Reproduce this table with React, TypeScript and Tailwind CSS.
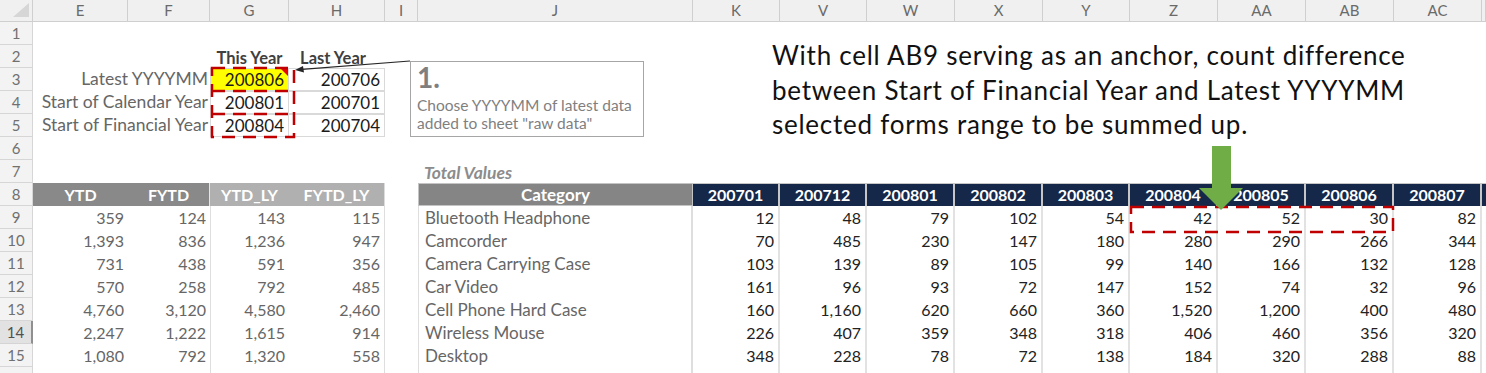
import React from 'react';

const letters = ['E', 'F', 'G', 'H', 'I', 'J', 'K', 'V', 'W', 'X', 'Y', 'Z', 'AA', 'AB', 'AC', ''];
const months = ['200701', '200712', '200801', '200802', '200803', '200804', '200805', '200806', '200807'];

const rows = [
    { cat: 'Bluetooth Headphone', left: ['359', '124', '143', '115'], vals: ['12', '48', '79', '102', '54', '42', '52', '30', '82'] },
    { cat: 'Camcorder', left: ['1,393', '836', '1,236', '947'], vals: ['70', '485', '230', '147', '180', '280', '290', '266', '344'] },
    { cat: 'Camera Carrying Case', left: ['731', '438', '591', '356'], vals: ['103', '139', '89', '105', '99', '140', '166', '132', '128'] },
    { cat: 'Car Video', left: ['570', '258', '792', '485'], vals: ['161', '96', '93', '72', '147', '152', '74', '32', '96'] },
    { cat: 'Cell Phone Hard Case', left: ['4,760', '3,120', '4,580', '2,460'], vals: ['160', '1,160', '620', '660', '360', '1,520', '1,200', '400', '480'] },
    { cat: 'Wireless Mouse', left: ['2,247', '1,222', '1,615', '914'], vals: ['226', '407', '359', '348', '318', '406', '460', '356', '320'] },
    { cat: 'Desktop', left: ['1,080', '792', '1,320', '558'], vals: ['348', '228', '78', '72', '138', '184', '320', '288', '88'] },
];

const periods = [
    { label: 'Latest YYYYMM', cur: '200806', prev: '200706' },
    { label: 'Start of Calendar Year', cur: '200801', prev: '200701' },
    { label: 'Start of Financial Year', cur: '200804', prev: '200704' },
];

function RowHead({ n, active }: { n?: number; active?: boolean }) {
    return (
        <div
            className={`col-start-1 flex items-center justify-center border-b text-[15px] ${active
                ? 'bg-[#e2e2e2] border-b-[#d4d4d4] border-r-2 border-r-[#8f8f8f] text-[#505050]'
                : 'bg-[#f3f3f3] border-r border-[#d6d6d6] text-[#707070]'
                }`}
        >
            {n}
        </div>
    );
}

// one body row of the report (E..H, I, J, K..AC, partial col)
function DataRow({ n, cat, left, vals, active }: { n?: number; cat: string; left: string[]; vals: string[]; active?: boolean }) {
    return (
        <>
            <RowHead n={n} active={active} />
            <div className="flex items-center justify-end pr-1 text-[#666]">{left[0]}</div>
            <div className="flex items-center justify-end pr-1 text-[#666]">{left[1]}</div>
            <div className="flex items-center justify-end pr-1 text-[#666] border-l border-[#dedede]">{left[2]}</div>
            <div className="flex items-center justify-end pr-1 text-[#666] border-r border-[#dedede]">{left[3]}</div>
            <div />
            <div className="flex items-center pl-1.5 text-[17px] text-[#666] border-l border-r-2 border-[#dedede]">{cat}</div>
            {vals.map((v, i) => (
                <div key={i} className="flex items-center justify-end pr-1 text-[#222] border-r-2 border-[#e2e2e2]">
                    {v}
                </div>
            ))}
            <div />
        </>
    );
}

export default function App() {
    return (
        <div className="relative w-[1486px] h-[373px] overflow-hidden bg-white font-['Lato',sans-serif] text-[16px]">
            <div className="grid grid-cols-[33px_95px_82px_79px_96px_33px_275px_87px_87px_88px_88px_87px_88px_88px_88px_88px_1fr] grid-rows-[22px_repeat(16,23px)]">
                {/* Column letters */}
                <div className="relative bg-[#f0f0f0] border-b border-r border-[#cfcfcf]">
                    <div className="absolute right-[3px] bottom-[4px] w-0 h-0 border-l-[16px] border-l-transparent border-b-[14px] border-b-[#d6d6d6]" />
                </div>
                {letters.map((l, i) => (
                    <div
                        key={i}
                        className="flex items-center justify-center bg-[#f0f0f0] border-b border-r border-[#cfcfcf] text-[15px] text-[#6a6a6a]"
                    >
                        {l}
                    </div>
                ))}

                <RowHead n={1} />

                <RowHead n={2} />
                <div className="col-start-4 flex items-end justify-center font-bold text-[16.5px] text-[#404040] leading-[20px]">This Year</div>
                <div className="flex items-end justify-center font-bold text-[16.5px] text-[#404040] leading-[20px] pr-2">Last Year</div>

                {periods.map((p, i) => (
                    <React.Fragment key={p.label}>
                        <RowHead n={3 + i} />
                        <div className="col-start-2 col-span-2 flex items-center justify-end pr-0.5 text-[17.5px] text-[#666] whitespace-nowrap">
                            {p.label}
                        </div>
                        <div className={`relative flex items-center justify-end pr-1 text-[17px] text-[#1a1a1a] border border-[#d9d9d9] ${i === 0 ? 'bg-[#ffff00]' : ''}`}>
                            {p.cur}
                            {i === 0 && (
                                <div className="absolute right-0 top-0 w-0 h-0 border-l-[7px] border-l-transparent border-t-[7px] border-t-[#e60000]" />
                            )}
                        </div>
                        <div className="flex items-center justify-end pr-1 text-[17px] text-[#1a1a1a] border border-l-0 border-[#d9d9d9]">{p.prev}</div>
                    </React.Fragment>
                ))}

                <RowHead n={6} />

                <RowHead n={7} />
                <div className="col-start-7 flex items-end pl-1.5 italic font-bold text-[17.5px] text-[#8c8c8c] leading-[20px]">Total Values</div>

                {/* Headers */}
                <RowHead n={8} />
                <div className="flex items-center justify-center bg-[#898989] text-white font-bold">YTD</div>
                <div className="flex items-center justify-center bg-[#898989] text-white font-bold border-r border-[#e6e6e6]">FYTD</div>
                <div className="flex items-center justify-center bg-[#b0b0b0] text-white font-bold">YTD_LY</div>
                <div className="flex items-center justify-center bg-[#b0b0b0] text-white font-bold border-r border-[#dcdcdc]">FYTD_LY</div>
                <div />
                <div className="flex items-center justify-center bg-[#858585] text-white font-bold text-[17px] border border-[#c4c4c4]">Category</div>
                {months.map((m) => (
                    <div key={m} className="flex items-center justify-center bg-[#16284a] text-white font-bold border-t border-r-2 border-[#c6c6c6]">
                        {m}
                    </div>
                ))}
                <div className="bg-[#16284a] border-t border-[#c6c6c6]" />

                {rows.map((r, i) => (
                    <DataRow key={r.cat} n={9 + i} cat={r.cat} left={r.left} vals={r.vals} active={i === 5} />
                ))}
                <DataRow cat="" left={['', '', '', '']} vals={['', '', '', '', '', '', '', '', '']} />
            </div>

            {/* Callout shape */}
            <div className="absolute left-[410px] top-[61px] w-[234px] h-[76px] bg-white border border-[#a6a6a6] px-[6px] text-[#7f7f7f]">
                <div className="text-[28px] font-bold leading-[28px] mt-[1px]">1.</div>
                <div className="text-[15.5px] leading-[18px] mt-[5px]">
                    <div>Choose YYYYMM of latest data</div>
                    <div>added to sheet "raw data"</div>
                </div>
            </div>

            {/* Text box */}
            <div className="absolute left-[772px] top-[38px] text-[26px] leading-[34.5px] tracking-[0.75px] text-[#111] whitespace-nowrap">
                <div>With cell AB9 serving as an anchor, count difference</div>
                <div>between Start of Financial Year and Latest YYYYMM</div>
                <div>selected forms range to be summed up.</div>
            </div>

            {/* Connector, dashed selections and green arrow */}
            <svg className="absolute left-0 top-0 pointer-events-none" width="1486" height="373">
                <line x1="410" y1="61" x2="302" y2="69.4" stroke="#262626" strokeWidth="1.2" />
                <polygon points="295,70 303,66 304,72.5" fill="#262626" />

                <g fill="none" stroke="#c00000" strokeWidth="2.5" strokeDasharray="13 8">
                    <rect x="212" y="68" width="82" height="69" />
                    <line x1="212" y1="91" x2="294" y2="91" />
                    <line x1="212" y1="114" x2="294" y2="114" />
                    <rect x="1131" y="207" width="262" height="25" />
                </g>

                <polygon points="1212,146 1231,146 1231,188 1243,188 1221,210 1199,188 1212,188" fill="#70ad47" />
            </svg>
        </div>
    );
}
